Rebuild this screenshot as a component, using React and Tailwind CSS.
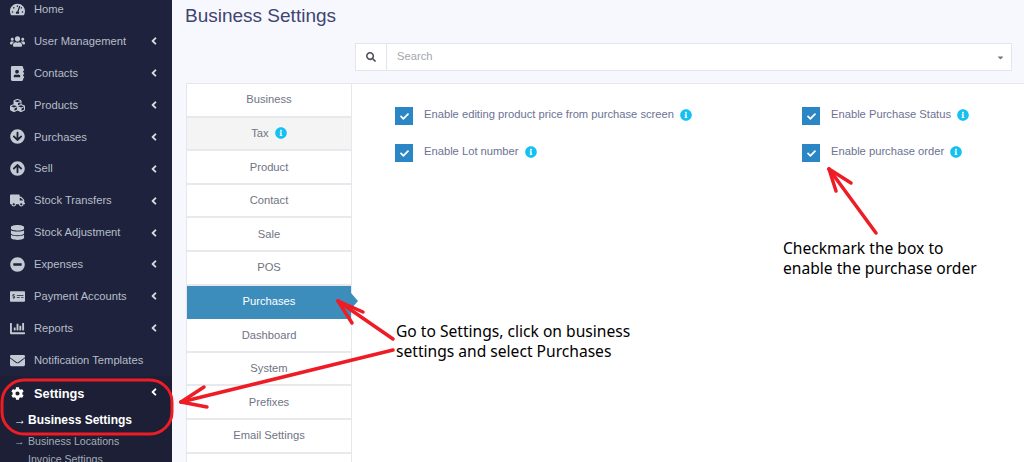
import {
  FaTachometerAlt,
  FaUsers,
  FaAddressBook,
  FaCubes,
  FaArrowCircleDown,
  FaArrowCircleUp,
  FaTruck,
  FaDatabase,
  FaMinusCircle,
  FaMoneyCheckAlt,
  FaChartBar,
  FaEnvelope,
  FaCog,
  FaSearch,
  FaInfoCircle,
  FaCheck,
  FaAngleLeft,
  FaCaretDown,
} from 'react-icons/fa'

const menu = [
  { name: 'Home', icon: FaTachometerAlt },
  { name: 'User Management', icon: FaUsers, sub: true },
  { name: 'Contacts', icon: FaAddressBook, sub: true },
  { name: 'Products', icon: FaCubes, sub: true },
  { name: 'Purchases', icon: FaArrowCircleDown, sub: true },
  { name: 'Sell', icon: FaArrowCircleUp, sub: true },
  { name: 'Stock Transfers', icon: FaTruck, sub: true },
  { name: 'Stock Adjustment', icon: FaDatabase, sub: true },
  { name: 'Expenses', icon: FaMinusCircle, sub: true },
  { name: 'Payment Accounts', icon: FaMoneyCheckAlt, sub: true },
  { name: 'Reports', icon: FaChartBar, sub: true },
  { name: 'Notification Templates', icon: FaEnvelope },
]

const tabs = ['Business', 'Tax', 'Product', 'Contact', 'Sale', 'POS', 'Purchases', 'Dashboard', 'System', 'Prefixes', 'Email Settings', '']

function Sidebar() {
  return (
    <div className="w-[172px] shrink-0 h-full bg-[#1f223c] overflow-hidden">
      <div className="-mt-[6.6px]">
        {menu.map((item) => (
          <div key={item.name} className="flex items-center h-[31.9px] pl-[10px] pr-[12px] text-[11.2px] text-[#b5bfca]">
            <span className="w-[24px] shrink-0 flex"><item.icon className="text-[15px] text-[#c2cbd3]" /></span>
            <span className="flex-1">{item.name}</span>
            {item.sub && <FaAngleLeft className="text-[12px] text-[#d5dbe0]" />}
          </div>
        ))}
      </div>
      <div className="bg-[#1c1f35] h-[110px]">
        <div className="flex items-center h-[34px] pl-[11px] pr-[12px] text-[12.8px] font-bold text-white">
          <span className="w-[23px] shrink-0 flex"><FaCog className="text-[13px]" /></span>
          <span className="flex-1">Settings</span>
          <FaAngleLeft className="text-[12px] -mt-[3px]" />
        </div>
        <div className="flex items-center h-[17px] mt-[1px] pl-[14px] text-[12px] font-bold text-white">
          <span className="w-[14px] font-normal">→</span>Business Settings
        </div>
        <div className="flex items-center h-[17px] mt-[5px] pl-[14px] text-[10.6px] text-[#a3adb8]">
          <span className="w-[14px]">→</span>Business Locations
        </div>
        <div className="flex items-center h-[17px] mt-[1px] pl-[28px] text-[10.6px] text-[#a3adb8]">
          Invoice Settings
        </div>
      </div>
    </div>
  )
}

function Info({ className = '' }) {
  return <FaInfoCircle className={`text-[12px] text-[#14c1f0] ${className}`} />
}

function Option({ label }) {
  return (
    <div className="flex items-center h-[18px] text-[11.2px] text-[#6c7293]">
      <span className="w-[18px] h-[18px] bg-[#2a86c5] flex items-center justify-center shrink-0 mr-[11px]">
        <FaCheck className="text-[9px] text-white" />
      </span>
      <span className="-mt-[3px] mr-[6px]">{label}</span>
      <Info className="-mt-[3px]" />
    </div>
  )
}

function Tabs() {
  return (
    <div className="w-[166px] shrink-0 border-l border-r border-[#e6e7ea]">
      {tabs.map((tab, index) => {
        const active = tab === 'Purchases'
        return (
          <div
            key={index}
            className={`relative h-[33.6px] shrink-0 flex items-center justify-center gap-[6px] text-[11.2px] border-b-2 ${
              active ? 'bg-[#3d8dbc] text-white border-[#3d8dbc]' : 'border-[#e8e9ec] text-[#6f7484]'
            } ${tab === 'Tax' ? 'bg-[#f4f4f4]' : ''}`}
          >
            {tab}
            {tab === 'Tax' && <Info />}
            {active && (
              <span className="absolute left-full top-1/2 -translate-y-1/2 w-0 h-0 border-y-[8px] border-y-transparent border-l-[7px] border-l-[#3d8dbc]" />
            )}
          </div>
        )
      })}
    </div>
  )
}

function Annotations() {
  return (
    <div className="absolute inset-0 pointer-events-none">
      <svg width="1024" height="462" className="absolute inset-0">
        <g fill="none" stroke="#ee1c25" strokeLinecap="round" strokeLinejoin="round">
          <rect x="2" y="380" width="170" height="54" rx="22" strokeWidth="3" />
          <g strokeWidth="3.5">
            <path d="M393 339 L338 301" />
            <path d="M338 301 L363 312" />
            <path d="M338 301 L352 323" />
            <path d="M393 350 L181 402" />
            <path d="M181 402 L204 387" />
            <path d="M181 402 L207 407" />
            <path d="M876 233 L829 169" />
            <path d="M829 169 L836 191" />
            <path d="M829 169 L851 183" />
          </g>
        </g>
      </svg>
      <div className="absolute left-[396px] top-[321px] w-[260px] text-[15.6px] leading-[20px] text-black font-['Noto_Sans',sans-serif]">
        Go to Settings, click on business settings and select Purchases
      </div>
      <div className="absolute left-[783px] top-[238px] w-[205px] text-[15.6px] leading-[20px] text-black font-['Noto_Sans',sans-serif]">
        Checkmark the box to enable the purchase order
      </div>
    </div>
  )
}

export default function App() {
  return (
    <div className="relative w-[1024px] h-[462px] overflow-hidden flex bg-[#f7f8fd] font-['Liberation_Sans',Arial,sans-serif]">
      <Sidebar />
      <div className="flex-1 min-w-0 flex flex-col">
        <h1 className="shrink-0 pl-[13px] pt-[4px] h-[43px] text-[19px] leading-[24px] text-[#3f4570] font-normal">Business Settings</h1>
        <div className="ml-[183px] mr-[12px] h-[28px] shrink-0 flex items-center bg-white border border-[#e2e5ec] text-[11.2px]">
          <span className="w-[31px] h-full flex items-center justify-center border-r border-[#e2e5ec] shrink-0">
            <FaSearch className="text-[10px] text-[#4b4f57]" />
          </span>
          <span className="pl-[10px] flex-1 -mt-[2px] text-[#a3a7ad]">Search</span>
          <FaCaretDown className="text-[9px] text-[#777] mr-[6px]" />
        </div>
        <div className="mt-[12px] ml-[14px] flex-1 min-h-0 overflow-hidden flex bg-white border-t border-[#e6e7ea]">
          <Tabs />
          <div className="flex-1 pl-[43px] pt-[23px] flex">
            <div className="w-[407px] flex flex-col gap-[19px]">
              <Option label="Enable editing product price from purchase screen" />
              <Option label="Enable Lot number" />
            </div>
            <div className="flex flex-col gap-[19px]">
              <Option label="Enable Purchase Status" />
              <Option label="Enable purchase order" />
            </div>
          </div>
        </div>
      </div>
      <Annotations />
    </div>
  )
}
